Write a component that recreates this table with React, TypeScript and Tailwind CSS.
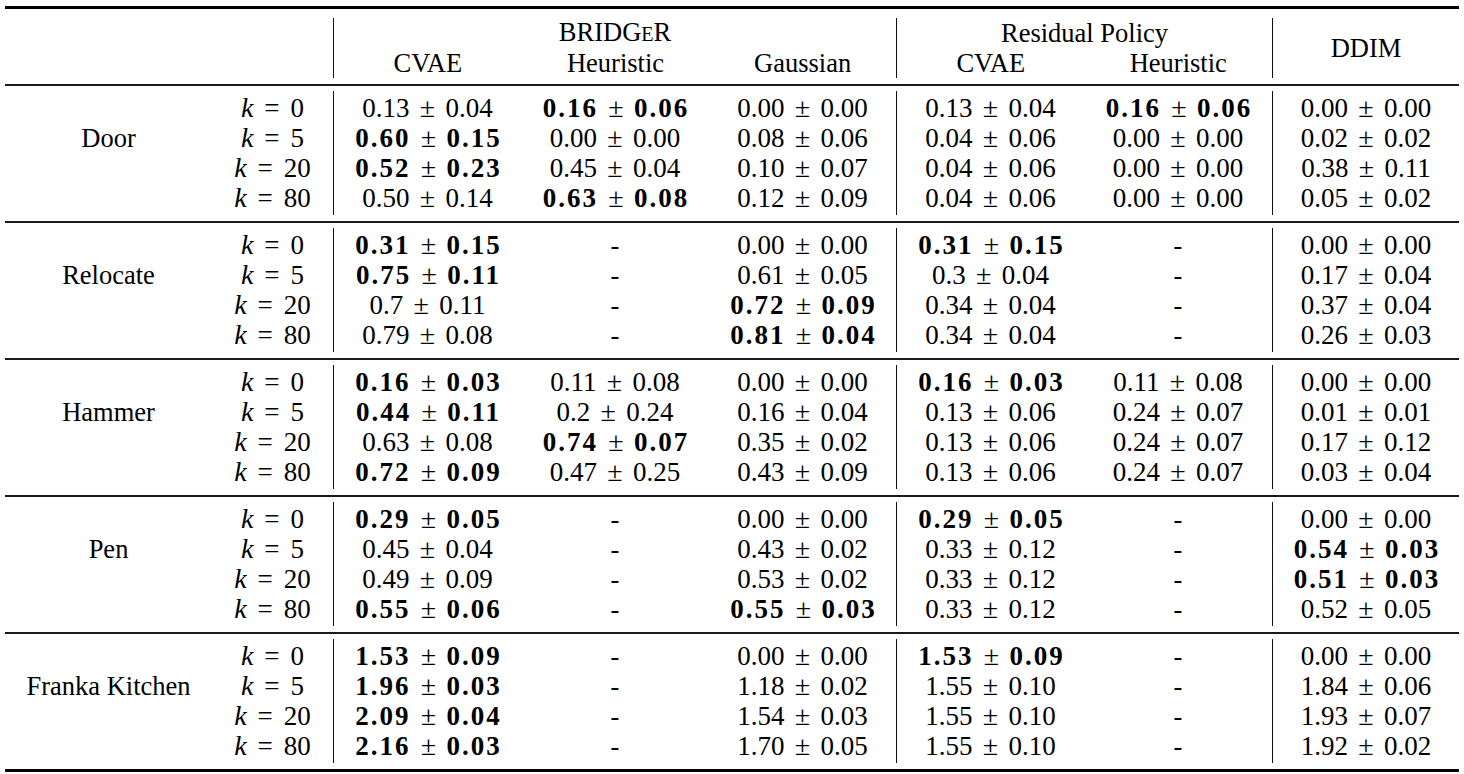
import React from "react";

type Group = { name: string; rows: string[][] };

const KS = ["0", "5", "20", "80"];

const GROUPS: Group[] = [
  {
    name: "Door",
    rows: [
      ["0.13±0.04", "*0.16±0.06", "0.00±0.00", "0.13±0.04", "*0.16±0.06", "0.00±0.00"],
      ["*0.60±0.15", "0.00±0.00", "0.08±0.06", "0.04±0.06", "0.00±0.00", "0.02±0.02"],
      ["*0.52±0.23", "0.45±0.04", "0.10±0.07", "0.04±0.06", "0.00±0.00", "0.38±0.11"],
      ["0.50±0.14", "*0.63±0.08", "0.12±0.09", "0.04±0.06", "0.00±0.00", "0.05±0.02"],
    ],
  },
  {
    name: "Relocate",
    rows: [
      ["*0.31±0.15", "-", "0.00±0.00", "*0.31±0.15", "-", "0.00±0.00"],
      ["*0.75±0.11", "-", "0.61±0.05", "0.3±0.04", "-", "0.17±0.04"],
      ["0.7±0.11", "-", "*0.72±0.09", "0.34±0.04", "-", "0.37±0.04"],
      ["0.79±0.08", "-", "*0.81±0.04", "0.34±0.04", "-", "0.26±0.03"],
    ],
  },
  {
    name: "Hammer",
    rows: [
      ["*0.16±0.03", "0.11±0.08", "0.00±0.00", "*0.16±0.03", "0.11±0.08", "0.00±0.00"],
      ["*0.44±0.11", "0.2±0.24", "0.16±0.04", "0.13±0.06", "0.24±0.07", "0.01±0.01"],
      ["0.63±0.08", "*0.74±0.07", "0.35±0.02", "0.13±0.06", "0.24±0.07", "0.17±0.12"],
      ["*0.72±0.09", "0.47±0.25", "0.43±0.09", "0.13±0.06", "0.24±0.07", "0.03±0.04"],
    ],
  },
  {
    name: "Pen",
    rows: [
      ["*0.29±0.05", "-", "0.00±0.00", "*0.29±0.05", "-", "0.00±0.00"],
      ["0.45±0.04", "-", "0.43±0.02", "0.33±0.12", "-", "*0.54±0.03"],
      ["0.49±0.09", "-", "0.53±0.02", "0.33±0.12", "-", "*0.51±0.03"],
      ["*0.55±0.06", "-", "*0.55±0.03", "0.33±0.12", "-", "0.52±0.05"],
    ],
  },
  {
    name: "Franka Kitchen",
    rows: [
      ["*1.53±0.09", "-", "0.00±0.00", "*1.53±0.09", "-", "0.00±0.00"],
      ["*1.96±0.03", "-", "1.18±0.02", "1.55±0.10", "-", "1.84±0.06"],
      ["*2.09±0.04", "-", "1.54±0.03", "1.55±0.10", "-", "1.93±0.07"],
      ["*2.16±0.03", "-", "1.70±0.05", "1.55±0.10", "-", "1.92±0.02"],
    ],
  },
];

// columns that start with a vertical rule
const RULED = [0, 3, 5];
const COL_W = ["w-[188px]", "w-[188px]", "w-[187px]", "w-[188px]", "w-[188px]", "w-[187px]"];

function Val({ v }: { v: string }) {
  if (v === "-") return <span className="text-[26.5px]">-</span>;
  const bold = v.startsWith("*");
  const [a, b] = v.replace("*", "").split("±");
  const num = bold ? "font-bold tracking-[2px]" : "";
  return (
    <span className="inline-flex items-baseline text-[27px]">
      <span className={num}>{a}</span>
      <span className="inline-block w-[36px] text-center text-[28px]">±</span>
      <span className={bold ? "font-bold tracking-[2px] -mr-[2px]" : ""}>{b}</span>
    </span>
  );
}

function KLabel({ k }: { k: string }) {
  return (
    <span className="inline-flex items-baseline text-[27px]">
      <span className="italic text-[28px]">k</span>
      <span className="inline-block w-[37px] text-center">=</span>
      <span>{k}</span>
    </span>
  );
}

function Section({ g }: { g: Group }) {
  return (
    <div className="pt-[5px] pb-[6px] flex">
      <div className="w-[207px] flex flex-col py-[2px]">
        {KS.map((_, i) => (
          <div key={i} className="h-[30px] flex items-center justify-center text-[26.5px]">
            {i === 1 ? g.name : ""}
          </div>
        ))}
      </div>
      <div className="w-[121px] flex flex-col py-[2px]">
        {KS.map((k) => (
          <div key={k} className="h-[30px] flex items-center justify-center">
            <KLabel k={k} />
          </div>
        ))}
      </div>
      {COL_W.map((w, c) => (
        <div
          key={c}
          className={`${w} flex flex-col py-[2px] ${RULED.includes(c) ? "border-l border-[#111]" : ""}`}
        >
          {g.rows.map((r, i) => (
            <div key={i} className="h-[30px] flex items-center justify-center">
              <Val v={r[c]} />
            </div>
          ))}
        </div>
      ))}
    </div>
  );
}

export default function App() {
  return (
    <div className="w-[1464px] h-[774px] bg-white text-black pt-[6px] px-[5px] font-['Liberation_Serif',serif] leading-[30px]">
      <div className="w-[1454px]">
        <div className="h-[3px] bg-black" />

        {/* header */}
        <div className="pt-[9px] pb-[6px] flex text-[26.5px]">
          <div className="w-[328px]" />
          <div className="w-[563px] border-l border-[#111] flex flex-col">
            <div className="h-[30px] flex items-center justify-center">
              <span>
                BRIDG<span className="text-[20px]">E</span>R
              </span>
            </div>
            <div className="h-[30px] flex">
              <div className="w-[188px] text-center">CVAE</div>
              <div className="w-[188px] text-center">Heuristic</div>
              <div className="w-[187px] text-center">Gaussian</div>
            </div>
          </div>
          <div className="w-[376px] border-l border-[#111] flex flex-col">
            <div className="h-[30px] flex items-center justify-center">Residual Policy</div>
            <div className="h-[30px] flex">
              <div className="w-[188px] text-center">CVAE</div>
              <div className="w-[188px] text-center">Heuristic</div>
            </div>
          </div>
          <div className="w-[187px] h-[60px] border-l border-[#111] flex items-center justify-center">
            DDIM
          </div>
        </div>

        {GROUPS.map((g) => (
          <div key={g.name}>
            <div className="h-[2px] bg-[#1a1a1a]" />
            <Section g={g} />
          </div>
        ))}

        <div className="h-[3px] bg-black" />
      </div>
    </div>
  );
}
